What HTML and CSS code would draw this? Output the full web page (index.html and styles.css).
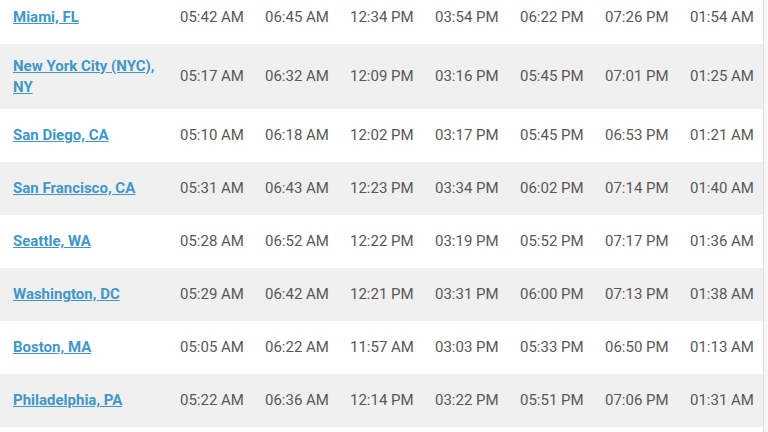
FILE: index.html
```html
<!DOCTYPE html>
<html>
<head>
<meta charset="utf-8">
<link rel="stylesheet" href="styles.css">
</head>
<body>
<div class="wrap">
<table class="times">
<tbody>
<tr><td class="city"><a href="#">Miami, FL</a></td><td>05:42 AM</td><td>06:45 AM</td><td>12:34 PM</td><td>03:54 PM</td><td>06:22 PM</td><td>07:26 PM</td><td>01:54 AM</td></tr>
<tr class="alt"><td class="city"><a href="#">New York City (NYC), NY</a></td><td>05:17 AM</td><td>06:32 AM</td><td>12:09 PM</td><td>03:16 PM</td><td>05:45 PM</td><td>07:01 PM</td><td>01:25 AM</td></tr>
<tr><td class="city"><a href="#">San Diego, CA</a></td><td>05:10 AM</td><td>06:18 AM</td><td>12:02 PM</td><td>03:17 PM</td><td>05:45 PM</td><td>06:53 PM</td><td>01:21 AM</td></tr>
<tr class="alt"><td class="city"><a href="#">San Francisco, CA</a></td><td>05:31 AM</td><td>06:43 AM</td><td>12:23 PM</td><td>03:34 PM</td><td>06:02 PM</td><td>07:14 PM</td><td>01:40 AM</td></tr>
<tr><td class="city"><a href="#">Seattle, WA</a></td><td>05:28 AM</td><td>06:52 AM</td><td>12:22 PM</td><td>03:19 PM</td><td>05:52 PM</td><td>07:17 PM</td><td>01:36 AM</td></tr>
<tr class="alt"><td class="city"><a href="#">Washington, DC</a></td><td>05:29 AM</td><td>06:42 AM</td><td>12:21 PM</td><td>03:31 PM</td><td>06:00 PM</td><td>07:13 PM</td><td>01:38 AM</td></tr>
<tr><td class="city"><a href="#">Boston, MA</a></td><td>05:05 AM</td><td>06:22 AM</td><td>11:57 AM</td><td>03:03 PM</td><td>05:33 PM</td><td>06:50 PM</td><td>01:13 AM</td></tr>
<tr class="alt"><td class="city"><a href="#">Philadelphia, PA</a></td><td>05:22 AM</td><td>06:36 AM</td><td>12:14 PM</td><td>03:22 PM</td><td>05:51 PM</td><td>07:06 PM</td><td>01:31 AM</td></tr>
</tbody>
</table>
</div>
</body>
</html>
```

FILE: styles.css
```css
html, body {
  margin: 0;
  padding: 0;
  background: #f7f7f7;
  overflow: hidden;
}
.wrap {
  width: 763px;
  border-right: 1px solid #dcdcdc;
  background: #ffffff;
  margin-top: -9px;
  padding-bottom: 20px;
}
.times {
  width: 763px;
  border-collapse: collapse;
  table-layout: fixed;
  font-family: Roboto, "Liberation Sans", sans-serif;
  font-size: 15px;
  color: #585858;
}
.times td {
  width: 73px;
  height: 30px;
  padding: 11.5px 0 11.5px 12px;
  line-height: 21px;
  vertical-align: middle;
  white-space: nowrap;
}
.times td.city {
  width: 155px;
  padding-left: 13px;
  white-space: normal;
  padding-right: 0;
}
.times tr {
  height: 53px;
}
.times tr.alt {
  background: #f0f0f0;
}
.city a {
  color: #4197c6;
  font-weight: 700;
  text-decoration: underline;
}
```
